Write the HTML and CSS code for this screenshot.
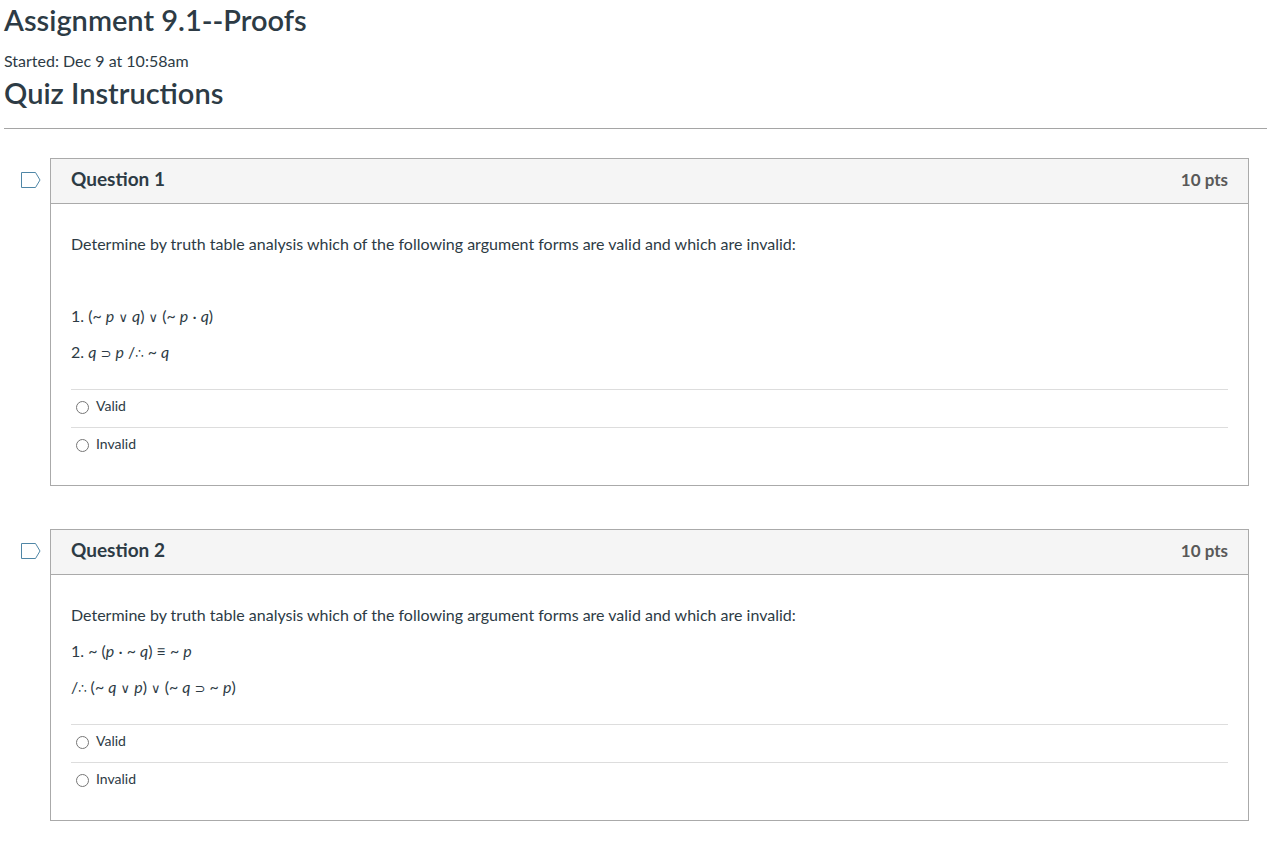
FILE: index.html
```html
<!DOCTYPE html>
<html lang="en">
<head>
<meta charset="utf-8">
<title>Assignment 9.1--Proofs</title>
<link rel="stylesheet" href="styles.css">
</head>
<body>
<main class="quiz">
  <header class="quiz-header">
    <h1 class="heading">Assignment 9.1--Proofs</h1>
    <div class="started">Started: Dec 9 at 10:58am</div>
    <h2 class="heading">Quiz Instructions</h2>
  </header>
  <form class="questions">
    <section class="question">
      <button class="flag" type="button" aria-label="Flag question 1">
        <svg width="21" height="16" viewBox="0 0 21 16" fill="none" stroke="#4f86a6"><path d="M1.5 .5H15.5L20 8L15.5 15.5H1.5Z"/></svg>
      </button>
      <div class="card">
        <div class="card-header"><h3 class="name">Question 1</h3><span class="points">10 pts</span></div>
        <div class="card-body">
          <div class="prompt">
            <p>Determine by truth table analysis which of the following argument forms are valid and which are invalid:</p>
            <p>&nbsp;</p>
            <p>1. (~ <em>p</em> <span class="symbol">∨</span> <em>q</em>) <span class="symbol">∨</span> (~ <em>p</em> · <em>q</em>)</p>
            <p>2. <em>q</em> <span class="symbol">⊃</span> <em>p</em> /<span class="symbol">∴</span> ~ <em>q</em></p>
          </div>
          <div class="answers">
            <label class="answer"><input type="radio" name="question1"><span>Valid</span></label>
            <label class="answer"><input type="radio" name="question1"><span>Invalid</span></label>
          </div>
        </div>
      </div>
    </section>
    <section class="question">
      <button class="flag" type="button" aria-label="Flag question 2">
        <svg width="21" height="16" viewBox="0 0 21 16" fill="none" stroke="#4f86a6"><path d="M1.5 .5H15.5L20 8L15.5 15.5H1.5Z"/></svg>
      </button>
      <div class="card">
        <div class="card-header"><h3 class="name">Question 2</h3><span class="points">10 pts</span></div>
        <div class="card-body">
          <div class="prompt">
            <p>Determine by truth table analysis which of the following argument forms are valid and which are invalid:</p>
            <p>1. ~ (<em>p</em> · ~ <em>q</em>) ≡ ~ <em>p</em></p>
            <p>/<span class="symbol">∴</span> (~ <em>q</em> <span class="symbol">∨</span> <em>p</em>) <span class="symbol">∨</span> (~ <em>q</em> <span class="symbol">⊃</span> ~ <em>p</em>)</p>
          </div>
          <div class="answers">
            <label class="answer"><input type="radio" name="question2"><span>Valid</span></label>
            <label class="answer"><input type="radio" name="question2"><span>Invalid</span></label>
          </div>
        </div>
      </div>
    </section>
  </form>
</main>
</body>
</html>
```
FILE: styles.css
```css
* { box-sizing: border-box; }
body {
  margin: 0;
  background: #fff;
  color: #2d3b45;
  font: 400 16px/24px Lato, "Liberation Sans", sans-serif;
}
.quiz { padding-left: 4px; }
.quiz-header {
  padding: 1px 0 17px;
  border-bottom: 1px solid #a5a5a5;
}
.heading {
  margin: 0;
  font-size: 29px;
  line-height: 37px;
  font-weight: 600;
}
.started { margin: 11px 0 1px; }
.questions {
  display: flex;
  flex-direction: column;
  gap: 43px;
  padding: 29px 18px 23px 16px;
}
.question { display: flex; align-items: flex-start; }
.flag {
  flex: none;
  width: 30px;
  margin-top: 14px;
  padding: 0;
  border: 0;
  background: none;
  text-align: left;
  line-height: 0;
}
.card { flex: 1; border: 1px solid #aaa; }
.card-header {
  display: flex;
  align-items: baseline;
  justify-content: space-between;
  height: 45px;
  padding: 8px 20px 0;
  background: #f5f5f5;
  border-bottom: 1px solid #aaa;
}
.name { margin: 0; font-size: 19px; font-weight: 700; }
.points { color: #595959; font-size: 17px; font-weight: 700; }
.card-body { padding: 28px 20px 20px; }
.prompt p { margin: 0 0 12px; }
.symbol { font-family: "DejaVu Sans", sans-serif; font-size: 13px; line-height: 1; }
.answers { padding-top: 13px; }
.answer {
  display: flex;
  align-items: center;
  height: 38px;
  padding: 0 0 4px 5px;
  border-top: 1px solid #ddd;
  font-size: 14px;
  line-height: 20px;
}
.answer input { width: 13px; height: 13px; margin: 2px 7px 0 0; }
.answer span { padding-bottom: 2px; }
```
